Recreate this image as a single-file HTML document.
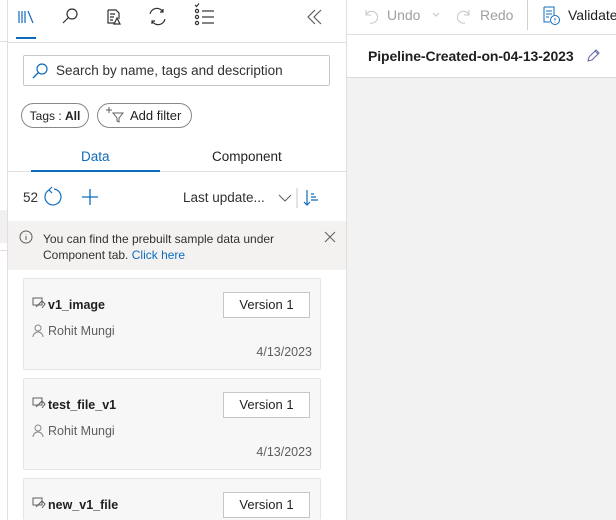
<!DOCTYPE html>
<html style="width:616px;height:520px;overflow:hidden"><head><style>
*{margin:0;padding:0;box-sizing:border-box}
body{width:616px;height:520px;overflow:hidden;background:#fff;font-family:"Liberation Sans",sans-serif;font-size:13px;color:#323130;position:relative}
.a{position:absolute}
.card{position:absolute;left:23px;width:298px;height:92px;background:#f7f7f7;border:1px solid #e5e5e5;border-radius:2px}
.ver{position:absolute;left:199px;top:13px;width:87px;height:26px;border:1px solid #c8c6c4;background:#fff;font-size:13px;text-align:center;line-height:24px;color:#201f1e}
.nm{position:absolute;left:24px;top:19px;font-weight:bold;font-size:12.5px;color:#201f1e}
.by{position:absolute;left:24px;top:45px;color:#605e5c;font-size:12.5px}
.dt{position:absolute;right:8px;top:66px;color:#605e5c;font-size:12.5px}
</style></head><body>
<div class="a" style="left:7px;top:0;width:1px;height:520px;background:#e1dfdd"></div>
<div class="a" style="left:0;top:41px;width:7px;height:1px;background:#e1dfdd"></div>
<div class="a" style="left:0;top:210px;width:7px;height:33px;background:#f0f0f0"></div>
<div class="a" style="left:0;top:250px;width:7px;height:1px;background:#e1dfdd"></div>
<div class="a" style="left:346px;top:0;width:1px;height:520px;background:#e1dfdd"></div>
<svg class="a" style="left:0;top:0" width="346" height="44">
<g stroke="#323130" stroke-width="1.2" fill="none">
<g stroke="#0f6cbd"><line x1="19" y1="11" x2="19" y2="23"/><line x1="22" y1="11" x2="22" y2="23"/><line x1="25" y1="11" x2="25" y2="23"/><line x1="28" y1="11" x2="33" y2="23"/></g>
<circle cx="72" cy="14" r="5"/><line x1="68" y1="18" x2="63" y2="23"/>
<path d="M108 10h8l3 3v6M108 10v13h6M110 14h5M110 17h4M110 20h3M117 18l-3 6h6z"/>
<path d="M150 14a7 7 0 0 1 13-2M163 9v3h-3M165 19a7 7 0 0 1-13 2M152 24v-3h3"/>
<circle cx="197" cy="11" r="1.6"/><circle cx="197" cy="17" r="1.6"/><circle cx="197" cy="23" r="1.6"/>
<line x1="202" y1="11" x2="214" y2="11"/><line x1="202" y1="17" x2="214" y2="17"/><line x1="202" y1="23" x2="214" y2="23"/><path d="M195 5l1.5 1.5 2.5-3"/>
<path d="M315 10l-7 7 7 7M321 10l-7 7 7 7" stroke="#605e5c"/>
</g></svg>
<div class="a" style="left:16px;top:37px;width:20px;height:2px;background:#0f6cbd"></div>
<div class="a" style="left:8px;top:42px;width:338px;height:1px;background:#e1dfdd"></div>
<div class="a" style="left:23px;top:55px;width:307px;height:31px;border:1px solid #c8c6c4;border-radius:2px"></div>
<svg class="a" style="left:31px;top:62px" width="18" height="18"><circle cx="11" cy="7" r="5" stroke="#0f6cbd" fill="none" stroke-width="1.2"/><line x1="7.5" y1="10.5" x2="2" y2="16" stroke="#0f6cbd" stroke-width="1.3"/></svg>
<div class="a" style="left:56px;top:63px;font-size:13.5px;color:#323130">Search by name, tags and description</div>
<div class="a" style="left:21px;top:103px;width:68px;height:25px;border:1px solid #8a8886;border-radius:13px;font-size:12px;line-height:24px;text-align:center;color:#201f1e">Tags : <b>All</b></div>
<div class="a" style="left:97px;top:103px;width:95px;height:25px;border:1px solid #8a8886;border-radius:13px"></div>
<svg class="a" style="left:105px;top:106px" width="24" height="18"><path d="M1 4h6M4 1v6M8 7h10l-4 5v4l-2-1v-3z" stroke="#605e5c" fill="none"/></svg>
<div class="a" style="left:130px;top:108px;font-size:13px;color:#201f1e">Add filter</div>
<div class="a" style="left:81px;top:149px;font-size:13.5px;color:#0f6cbd">Data</div>
<div class="a" style="left:212px;top:149px;font-size:13.5px;color:#201f1e">Component</div>
<div class="a" style="left:8px;top:171px;width:338px;height:1px;background:#e1dfdd"></div>
<div class="a" style="left:31px;top:170px;width:129px;height:2px;background:#0f6cbd"></div>
<div class="a" style="left:23px;top:190px;font-size:13.5px;color:#323130">52</div>
<svg class="a" style="left:43px;top:185px" width="70" height="24"><path d="M6 5a8 8 0 1 0 5-1" stroke="#0f6cbd" fill="none" stroke-width="1.2"/><path d="M9 2l-3 3 3 3" stroke="#0f6cbd" fill="none" stroke-width="1.2"/><path d="M47 4v16M39 12h16" stroke="#0f6cbd" stroke-width="1.3"/></svg>
<div class="a" style="left:183px;top:190px;font-size:13.5px;color:#323130">Last update...</div>
<svg class="a" style="left:276px;top:186px" width="50" height="24"><path d="M3 9l6 6 6-6" stroke="#605e5c" fill="none"/><line x1="21" y1="2" x2="21" y2="22" stroke="#c8c6c4"/><path d="M31 4v15M28 16l3 3 3-3M35 8h3M35 11h5M35 14h7" stroke="#0f6cbd" fill="none" stroke-width="1.2"/></svg>
<div class="a" style="left:8px;top:221px;width:338px;height:49px;background:#f3f2f1"></div>
<svg class="a" style="left:18px;top:229px" width="16" height="16"><circle cx="8" cy="8" r="6" stroke="#605e5c" fill="none"/><path d="M8 7v4M8 5v.5" stroke="#605e5c"/></svg>
<div class="a" style="left:43px;top:231px;font-size:12px;line-height:16px;color:#323130">You can find the prebuilt sample data under<br>Component tab. <span style="color:#0f6cbd">Click here</span></div>
<svg class="a" style="left:324px;top:231px" width="12" height="12"><path d="M1 1l10 10M11 1L1 11" stroke="#605e5c"/></svg>
<div class="card" style="top:278px"><svg class="a" style="left:8px;top:18px" width="14" height="12"><rect x="1" y="1" width="9" height="7" stroke="#605e5c" fill="none"/><path d="M4 10l6-6 3 3-3 4" stroke="#605e5c" fill="none"/></svg><div class="nm">v1_image</div><div class="ver">Version 1</div><svg class="a" style="left:8px;top:45px" width="14" height="14"><circle cx="6" cy="4" r="3" stroke="#8a8886" fill="none"/><path d="M1 13a5 5 0 0 1 10 0" stroke="#8a8886" fill="none"/></svg><div class="by">Rohit Mungi</div><div class="dt">4/13/2023</div></div>
<div class="card" style="top:378px"><svg class="a" style="left:8px;top:18px" width="14" height="12"><rect x="1" y="1" width="9" height="7" stroke="#605e5c" fill="none"/><path d="M4 10l6-6 3 3-3 4" stroke="#605e5c" fill="none"/></svg><div class="nm">test_file_v1</div><div class="ver">Version 1</div><svg class="a" style="left:8px;top:45px" width="14" height="14"><circle cx="6" cy="4" r="3" stroke="#8a8886" fill="none"/><path d="M1 13a5 5 0 0 1 10 0" stroke="#8a8886" fill="none"/></svg><div class="by">Rohit Mungi</div><div class="dt">4/13/2023</div></div>
<div class="card" style="top:478px;height:42px;border-bottom:none"><svg class="a" style="left:8px;top:18px" width="14" height="12"><rect x="1" y="1" width="9" height="7" stroke="#605e5c" fill="none"/><path d="M4 10l6-6 3 3-3 4" stroke="#605e5c" fill="none"/></svg><div class="nm">new_v1_file</div><div class="ver">Version 1</div></div>
<div class="a" style="left:347px;top:77px;width:269px;height:443px;background:#f2f2f2;border-top:1px solid #dcdcdc"></div>
<div class="a" style="left:347px;top:34px;width:269px;height:1px;background:#e1dfdd"></div>
<svg class="a" style="left:360px;top:4px" width="120" height="24"><path d="M6 6v5h5M6 11a6 6 0 1 1 4 8" stroke="#c8c6c4" fill="none"/><path d="M73 9l3 3 3-3" stroke="#c8c6c4" fill="none"/><path d="M109 6v5h-5M109 11a6 6 0 1 0-4 8" stroke="#c8c6c4" fill="none"/></svg>
<div class="a" style="left:387px;top:7px;font-size:14px;color:#a19f9d">Undo</div>
<div class="a" style="left:480px;top:7px;font-size:14px;color:#a19f9d">Redo</div>
<div class="a" style="left:527px;top:0;width:1px;height:30px;background:#d2d0ce"></div>
<svg class="a" style="left:542px;top:6px" width="20" height="20"><path d="M2 1h10v8M2 1v15h6M4 5h6M4 8h6M4 11h3" stroke="#0f6cbd" fill="none"/><circle cx="13" cy="14" r="4.5" stroke="#0f6cbd" fill="none"/><path d="M13 12v2.5M13 16v.5" stroke="#0f6cbd"/></svg>
<div class="a" style="left:568px;top:7px;font-size:14px;color:#201f1e;white-space:nowrap">Validate</div>
<div class="a" style="left:368px;top:48px;font-size:14px;font-weight:bold;color:#201f1e;letter-spacing:-0.1px">Pipeline-Created-on-04-13-2023</div>
<svg class="a" style="left:585px;top:48px" width="16" height="16"><path d="M3 13l1-4 7-7 3 3-7 7zM10 3l3 3" stroke="#6264a7" fill="none"/></svg>
</body></html>
